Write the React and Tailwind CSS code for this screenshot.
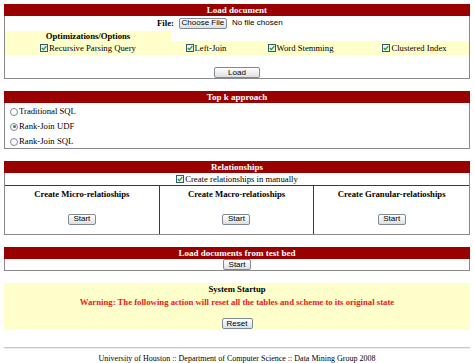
import React from 'react';

const Check = () => (
  <span className="inline-flex w-[8px] h-[8px] mr-[1px] border border-[#3b5670] bg-[#eef3ee] items-center justify-center align-middle">
    <svg width="6" height="6" viewBox="0 0 6 6">
      <path d="M0.8 3 L2.4 4.6 L5.3 1.2" fill="none" stroke="#1e9a2a" strokeWidth="1.3" />
    </svg>
  </span>
);

const Radio = ({ on }) => (
  <span className="inline-flex w-[8px] h-[8px] mr-[1px] rounded-full border border-[#7a8793] bg-white items-center justify-center">
    {on && <span className="w-[3px] h-[3px] rounded-full bg-[#3f7a45]" />}
  </span>
);

const Btn = ({ children, w }) => (
  <button className={`${w} h-[11px] rounded-[2px] border border-[#7f8a94] bg-gradient-to-b from-white to-[#dcdfe3] text-[8px] leading-none text-black [font-family:'Liberation_Sans',Arial,sans-serif] flex items-center justify-center`}>
    {children}
  </button>
);

const Header = ({ children }) => (
  <div className="h-[12px] bg-[#990000] text-white font-bold text-[9px] leading-[12px] text-center">{children}</div>
);

export default function App() {
  return (
    <div className="w-[474px] h-[363px] bg-white text-black [font-family:'Liberation_Serif','Times_New_Roman',serif] text-[8.7px] leading-none px-[4px] pt-[4px]">
      {/* Load document */}
      <Header>Load document</Header>
      <div className="h-[63px] border-x border-b border-[#8a8a8a] flex flex-col">
        <div className="h-[14px] flex items-center pl-[152px] gap-[5px]">
          <span className="font-bold">File:</span>
          <Btn w="w-[48px]">Choose File</Btn>
          <span className="[font-family:'Liberation_Sans',Arial,sans-serif] text-[8px]">No file chosen</span>
        </div>
        <div className="mt-[1px] grid grid-cols-[166px_70px_119px_1fr]">
          <div className="h-[10px] bg-[#ffffcc] font-bold text-center leading-[10px]">Optimizations/Options</div>
          <div className="col-span-3" />
        </div>
        <div className="h-[14px] bg-[#ffffcc] grid grid-cols-[166px_70px_119px_1fr]">
          {['Recursive Parsing Query', 'Left-Join', 'Word Stemming', 'Clustered Index'].map(t => (
            <div key={t} className="flex items-center justify-center">
              <Check />
              <span>{t}</span>
            </div>
          ))}
        </div>
        <div className="flex-1 flex items-end justify-center">
          <Btn w="w-[46px]">Load</Btn>
        </div>
      </div>

      {/* Top k approach */}
      <div className="mt-[12px]">
        <Header>Top k approach</Header>
        <div className="h-[46px] border-x border-b border-[#8a8a8a] pt-[1px] pl-[5px]">
          {[['Traditional SQL', false], ['Rank-Join UDF', true], ['Rank-Join SQL', false]].map(([t, on]) => (
            <div key={t} className="h-[15px] flex items-center">
              <Radio on={on} />
              <span>{t}</span>
            </div>
          ))}
        </div>
      </div>

      {/* Relationships */}
      <div className="mt-[12px]">
        <Header>Relationships</Header>
        <div className="border-x border-b border-[#8a8a8a]">
          <div className="h-[13px] flex items-center justify-center border-b border-[#3a3a3a]">
            <Check />
            <span>Create relationships in manually</span>
          </div>
          <div className="h-[48px] grid grid-cols-3">
            {['Create Micro-relatioships', 'Create Macro-relatioships', 'Create Granular-relatioships'].map((t, i) => (
              <div key={t} className={`flex flex-col items-center pt-[4px] ${i < 2 ? 'border-r border-[#3a3a3a]' : ''}`}>
                <span className="font-bold">{t}</span>
                <div className="mt-[15px]">
                  <Btn w="w-[28px]">Start</Btn>
                </div>
              </div>
            ))}
          </div>
        </div>
      </div>

      {/* Load documents from test bed */}
      <div className="mt-[12px]">
        <Header>Load documents from test bed</Header>
        <div className="h-[12px] border-x border-b border-[#8a8a8a] flex justify-center">
          <Btn w="w-[28px]">Start</Btn>
        </div>
      </div>

      {/* System Startup */}
      <div className="mt-[12px] h-[47px] bg-[#ffffcc] flex flex-col items-center pt-[2px]">
        <span className="font-bold">System Startup</span>
        <span className="mt-[4px] font-bold text-[#e8191b]">Warning: The following action will reset all the tables and scheme to its original state</span>
        <div className="mt-auto mb-[1px]">
          <Btn w="w-[31px]">Reset</Btn>
        </div>
      </div>

      <div className="mt-[17px] h-[2px] border-t border-[#c8c8c8] border-b border-b-[#ececec]" />
      <div className="mt-[6px] text-center text-[8px]">
        University of Houston :: Department of Computer Science :: Data Mining Group 2008
      </div>
    </div>
  );
}
